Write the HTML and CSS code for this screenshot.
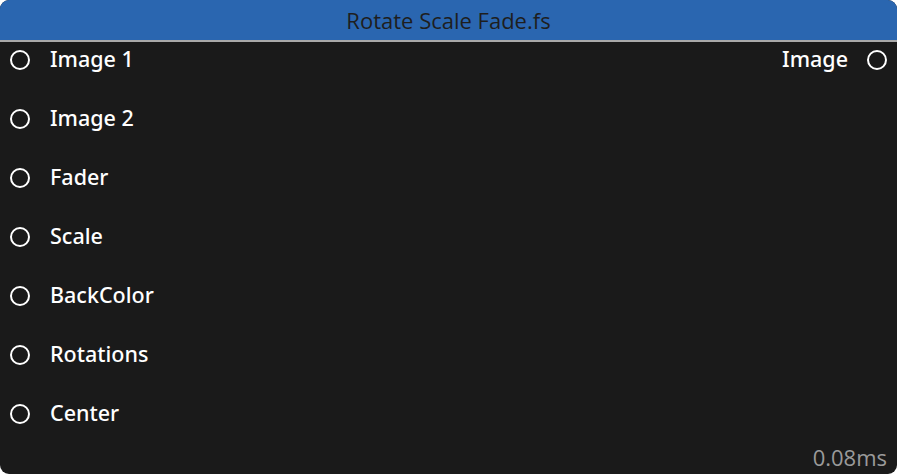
FILE: index.html
```html
<!DOCTYPE html>
<html>
<head>
<meta charset="utf-8">
<link rel="stylesheet" href="styles.css">
</head>
<body>
<div class="node">
  <div class="title">Rotate Scale Fade.fs</div>
  <div class="body">
    <div class="ports">
      <div class="inputs">
        <div class="port"><span class="dot"></span><span class="label">Image 1</span></div>
        <div class="port"><span class="dot"></span><span class="label">Image 2</span></div>
        <div class="port"><span class="dot"></span><span class="label">Fader</span></div>
        <div class="port"><span class="dot"></span><span class="label">Scale</span></div>
        <div class="port"><span class="dot"></span><span class="label">BackColor</span></div>
        <div class="port"><span class="dot"></span><span class="label">Rotations</span></div>
        <div class="port"><span class="dot"></span><span class="label">Center</span></div>
      </div>
      <div class="outputs">
        <div class="port out"><span class="label">Image</span><span class="dot"></span></div>
      </div>
    </div>
    <div class="footer">0.08ms</div>
  </div>
</div>
</body>
</html>
```
FILE: styles.css
```css
html, body {
  margin: 0;
  padding: 0;
  background: #ffffff;
}
.node {
  width: 897px;
  height: 474px;
  border-radius: 9px;
  overflow: hidden;
  background: #1a1a1a;
  display: flex;
  flex-direction: column;
  font-family: "Open Sans", "Noto Sans", sans-serif;
}
.title {
  height: 40px;
  background: #2a66b0;
  border-bottom: 2px solid #a9a9a9;
  color: #1e1e1e;
  font-size: 22px;
  line-height: 40px;
  text-align: center;
}
.body {
  flex: 1;
  display: flex;
  flex-direction: column;
}
.ports {
  display: flex;
  justify-content: space-between;
}
.inputs, .outputs {
  display: flex;
  flex-direction: column;
  gap: 23px;
}
.port {
  height: 36px;
  display: flex;
  align-items: center;
  padding-left: 10px;
}
.port.out {
  padding-left: 0;
  padding-right: 10px;
}
.dot {
  width: 16px;
  height: 16px;
  border: 2px solid #ffffff;
  border-radius: 50%;
  flex: none;
}
.label {
  color: #ffffff;
  font-family: "Noto Sans", "Open Sans", sans-serif;
  font-size: 21.5px;
  font-weight: 500;
  line-height: 32px;
  margin-bottom: 2px;
  margin-left: 20px;
}
.out .label {
  margin-left: 0;
  margin-right: 19px;
}
.footer {
  margin-top: auto;
  align-self: flex-end;
  color: #9a9a9a;
  font-size: 22px;
  padding-right: 10px;
  padding-bottom: 2px;
}
```
